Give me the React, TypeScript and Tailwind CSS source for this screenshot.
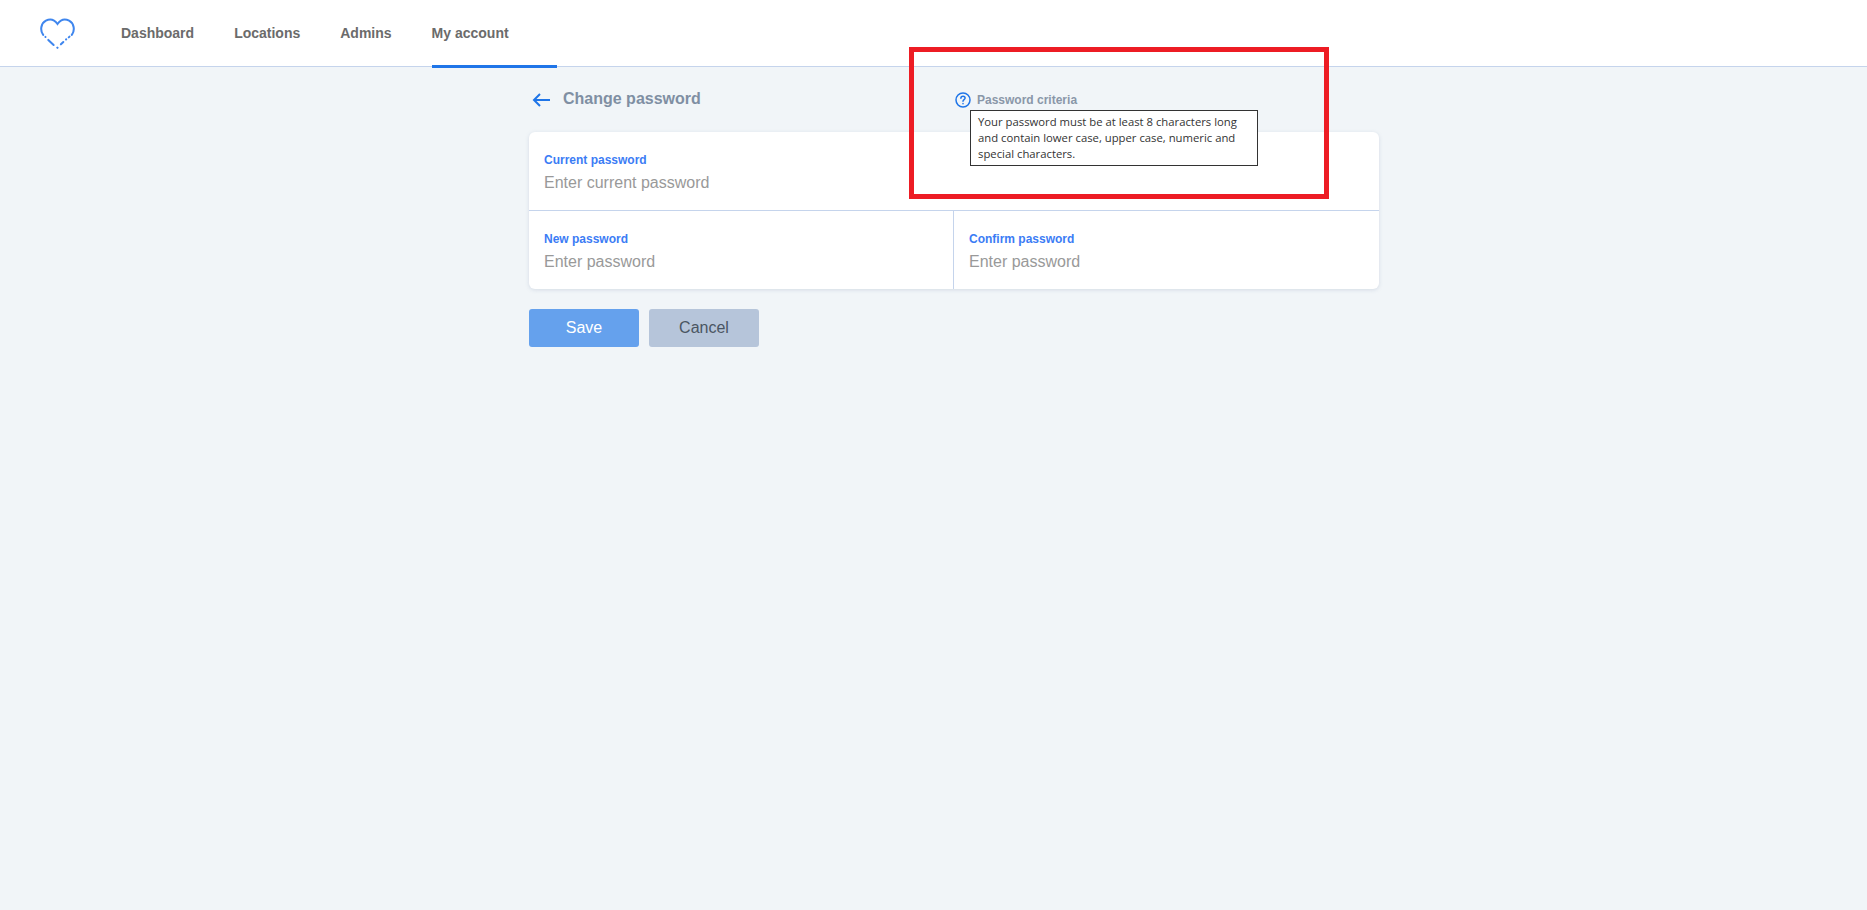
import { useState } from "react";

const sans = "font-['Liberation_Sans',Arial,sans-serif]";

const tabs = ["Dashboard", "Locations", "Admins", "My account"];

const HeartLogo = () => (
  <svg width="35" height="31" viewBox="0 0 36 32" fill="none" stroke="#3f86ee" strokeWidth="2.1" strokeLinecap="round">
    <path d="M3.2 17.5C-0.4 12.5 1 5.5 6 2.8C10.5 0.4 15 2 18 6.2C21 2 25.5 0.4 30 2.8C35 5.5 36.4 12.5 32.8 17.5" />
    <path d="M5.5 19.5L5.6 19.6" />
    <path d="M8.5 22.6L14 27.8" />
    <path d="M17.8 30.6L18 30.8" />
    <path d="M21.5 27.2L24 24.8" />
    <path d="M26.8 22.2L27 22" />
    <path d="M29.6 20L30.4 19.2" />
  </svg>
);

const Field = ({ label, placeholder, className }: { label: string; placeholder: string; className?: string }) => {
  const [value, setValue] = useState("");
  return (
    <div className={`flex h-[78px] flex-col px-[15px] pt-[20px] ${className ?? ""}`}>
      <label className="text-[12px] leading-[16px] font-bold text-[#3b7cf5]">{label}</label>
      <input
        type="password"
        value={value}
        onChange={(e) => setValue(e.target.value)}
        placeholder={placeholder}
        className="mt-[3px] h-[24px] w-full bg-transparent text-[16px] outline-none placeholder:text-[#999999]"
      />
    </div>
  );
};

export default function App() {
  return (
    <div className={`relative min-h-[910px] bg-[#f1f5f8] ${sans}`}>
      <header className="flex h-[67px] border-b border-[#c5d4ec] bg-white pl-[40px]">
        <div className="flex h-[66px] w-[81px] items-start pt-[18px]">
          <HeartLogo />
        </div>
        <nav className="flex gap-[40px]">
          {tabs.map((tab) => (
            <a
              key={tab}
              className={
                tab === "My account"
                  ? "h-[68px] w-[125px] border-b-[3px] border-[#1f75e8] pt-[25px] text-[14px] leading-[16px] font-bold text-[#6b6b6b]"
                  : "pt-[25px] text-[14px] leading-[16px] font-bold text-[#6b6b6b]"
              }
            >
              {tab}
            </a>
          ))}
        </nav>
      </header>

      <main className="ml-[529px] w-[850px]">
        <div className="flex h-[65px] items-center pb-[2px]">
          <div className="flex w-[424px] items-center">
            <svg width="18" height="14" viewBox="0 0 18 14" fill="none" stroke="#1f75e8" strokeWidth="2" className="ml-[3px] mt-[3px]">
              <path d="M18 7H2" />
              <path d="M8 1L2 7L8 13" />
            </svg>
            <h1 className="ml-[13px] text-[16px] leading-[20px] font-bold text-[#7f8fa3]">Change password</h1>
          </div>
          <div className="relative ml-[2px] flex items-center">
            <svg width="16" height="16" viewBox="0 0 16 16" fill="none" stroke="#1f75e8" strokeWidth="1.5" strokeLinecap="round" className="mt-[3px]">
              <circle cx="8" cy="8" r="7" />
              <path d="M5.9 6.2C5.9 5 6.8 4.2 8 4.2C9.2 4.2 10.1 5 10.1 6.1C10.1 7.6 8 7.6 8 9.3" />
              <path d="M8 11.6V11.7" />
            </svg>
            <span className="ml-[6px] mt-[2px] text-[12px] leading-[16px] font-bold text-[#8a97a8]">Password criteria</span>
            <div className="absolute top-[21px] left-[15px] z-10 w-[288px] border border-[#333333] bg-white px-[7px] py-[3px] font-['Open_Sans',sans-serif] text-[11.3px] leading-[16px] text-[#333333]">
              Your password must be at least 8 characters long and contain lower case, upper case, numeric and special characters.
            </div>
          </div>
        </div>

        <div className="rounded-[6px] bg-white shadow-[0_1px_4px_rgba(100,120,160,0.2)]">
          <Field label="Current password" placeholder="Enter current password" className="border-b border-[#c5d4ec] h-[79px]" />
          <div className="grid grid-cols-[425px_1fr]">
            <Field label="New password" placeholder="Enter password" className="border-r border-[#c5d4ec]" />
            <Field label="Confirm password" placeholder="Enter password" />
          </div>
        </div>

        <div className="mt-[20px] flex gap-[10px]">
          <button className="h-[38px] w-[110px] rounded-[3px] bg-[#65a1ed] text-[16px] text-white">Save</button>
          <button className="h-[38px] w-[110px] rounded-[3px] bg-[#b6c5da] text-[16px] text-[#4a5562]">Cancel</button>
        </div>
      </main>

      {/* annotation box from the screenshot */}
      <div className="pointer-events-none absolute top-[47px] left-[909px] z-20 h-[152px] w-[420px] border-[5px] border-[#ed1c24]" />
    </div>
  );
}
